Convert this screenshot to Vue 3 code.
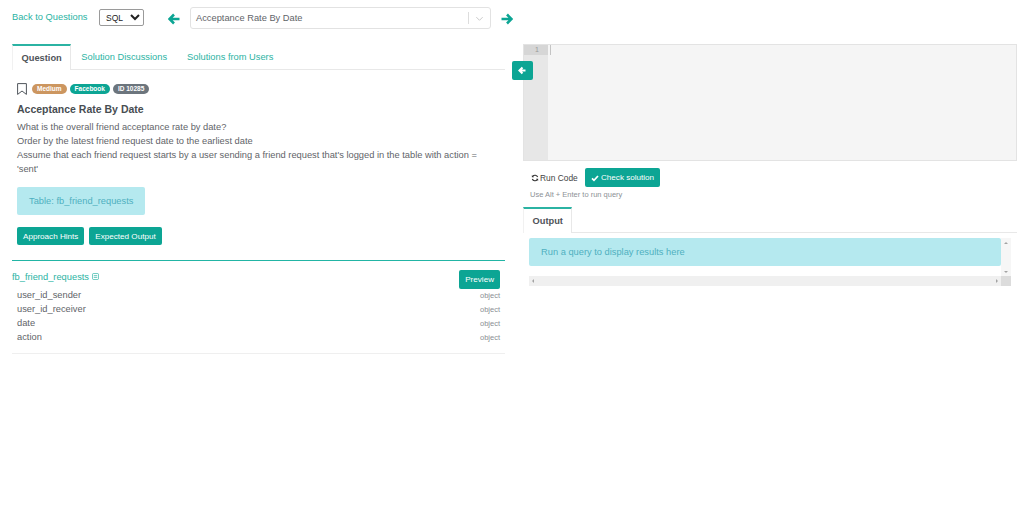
<template>
  <div class="page">
    <header class="topbar">
      <a class="back-link">Back to Questions</a>
      <select class="lang-select">
        <option v-for="lang in languages" :key="lang">{{ lang }}</option>
      </select>
      <svg class="nav-arrow prev" viewBox="0 0 12 12"><path d="M6 1.5 1.5 6 6 10.5M2 6h9.5" /></svg>
      <div class="combo">
        <span class="combo-value">Acceptance Rate By Date</span>
        <span class="combo-sep"></span>
        <svg class="combo-caret" viewBox="0 0 10 10"><path d="M1.5 3.5 5 7l3.5-3.5" /></svg>
      </div>
      <svg class="nav-arrow next" viewBox="0 0 12 12"><path d="M6 1.5 10.5 6 6 10.5M10 6H.5" /></svg>
    </header>

    <main class="columns">
      <section class="left">
        <nav class="tabs">
          <span class="tab active">Question</span>
          <a v-for="tab in tabs" :key="tab" class="tab">{{ tab }}</a>
        </nav>

        <div class="question">
          <div class="badges">
            <svg class="bookmark" viewBox="0 0 10 12"><path d="M.6.6h8.8v10.8L5 8 .6 11.4z" /></svg>
            <span class="badge medium">Medium</span>
            <span class="badge company">Facebook</span>
            <span class="badge qid">ID 10285</span>
          </div>
          <h1>Acceptance Rate By Date</h1>
          <p v-for="line in questionLines" :key="line">{{ line }}</p>
          <div class="alert table-alert">Table: fb_friend_requests</div>
          <div class="hint-buttons">
            <button class="btn">Approach Hints</button>
            <button class="btn">Expected Output</button>
          </div>
        </div>

        <div class="schema">
          <div class="schema-head">
            <span class="schema-name">fb_friend_requests
              <svg class="collapse" viewBox="0 0 8 8"><rect x=".5" y=".5" width="7" height="7" rx="1.5" /><path d="M2 3h4M2 5h4" /></svg>
            </span>
            <button class="btn">Preview</button>
          </div>
          <div v-for="col in schemaCols" :key="col" class="schema-row">
            <span>{{ col }}</span>
            <small>object</small>
          </div>
        </div>
      </section>

      <section class="right">
        <button class="collapse-btn" aria-label="Collapse">
          <svg viewBox="0 0 12 12"><path d="M6 2 2 6l4 4M2.5 6H10" /></svg>
        </button>
        <div class="editor">
          <div class="gutter"><span class="line-no">1</span></div>
          <div class="code"><span class="cursor"></span></div>
        </div>

        <div class="actions">
          <button class="run-btn">
            <svg viewBox="0 0 12 12"><path d="M10 4.5A4.3 4.3 0 0 0 2.6 3.6M2 7.5a4.3 4.3 0 0 0 7.4.9" /><path class="solid" d="M1.3 1.6v3.2h3.2zM10.7 10.4V7.2H7.5z" /></svg>
            Run Code
          </button>
          <button class="btn check-btn">
            <svg viewBox="0 0 12 12"><path d="M1.5 6.5l3 3 6-6.5" /></svg>
            Check solution
          </button>
        </div>
        <div class="run-hint">Use Alt + Enter to run query</div>

        <nav class="tabs output-tabs">
          <span class="tab active">Output</span>
        </nav>

        <div class="output">
          <div class="output-main">
            <div class="alert output-alert">Run a query to display results here</div>
            <div class="scroll-v"><i class="up"></i><i class="down"></i></div>
          </div>
          <div class="scroll-h"><i class="left-tri"></i><i class="right-tri"></i><span class="corner"></span></div>
        </div>
      </section>
    </main>
  </div>
</template>

<script setup>
const languages = ['SQL', 'Python']
const tabs = ['Solution Discussions', 'Solutions from Users']
const questionLines = [
  'What is the overall friend acceptance rate by date?',
  'Order by the latest friend request date to the earliest date',
  "Assume that each friend request starts by a user sending a friend request that's logged in the table with action = 'sent'",
]
const schemaCols = ['user_id_sender', 'user_id_receiver', 'date', 'action']
</script>

<style>
html, body {
  margin: 0;
  background: #fff;
}
</style>

<style scoped>
.page {
  width: 1024px;
  height: 512px;
  overflow: hidden;
  box-sizing: border-box;
  padding: 7px 7px 0 12px;
  font-family: "Liberation Sans", Arial, sans-serif;
  font-size: 9.3px;
  color: #5f6469;
}

.topbar {
  display: flex;
  align-items: center;
  height: 22px;
}
.back-link {
  color: #2bb3a3;
  width: 87px;
  margin-bottom: 2px;
}
.lang-select {
  width: 45px;
  height: 17px;
  padding: 0 0 0 2px;
  font: 8.5px "Liberation Sans", Arial, sans-serif;
  color: #222;
  background: #fff;
  border: 1px solid #9a9a9a;
  border-radius: 2px;
  margin-bottom: 1px;
}
.nav-arrow {
  width: 12px;
  height: 12px;
  fill: none;
  stroke: #0ca594;
  stroke-width: 2.6;
  margin-top: 2px;
}
.nav-arrow.prev {
  margin-left: 24px;
}
.nav-arrow.next {
  margin-left: 10px;
}
.combo {
  display: flex;
  align-items: center;
  width: 301px;
  height: 22px;
  box-sizing: border-box;
  margin-left: 10px;
  padding: 0 6px 0 5px;
  border: 1px solid #e2e2e2;
  border-radius: 3px;
}
.combo-value {
  flex: 1;
  color: #5f6469;
}
.combo-sep {
  width: 1px;
  height: 12px;
  background: #ddd;
  margin-right: 6px;
}
.combo-caret {
  width: 9px;
  height: 9px;
  fill: none;
  stroke: #c4c4c4;
}

.columns {
  display: grid;
  grid-template-columns: 493px 494px;
  column-gap: 18px;
  margin-top: 15px;
}

.tabs {
  display: flex;
  height: 26px;
  border-bottom: 1px solid #e8e8e8;
  box-sizing: border-box;
}
.tab {
  display: flex;
  align-items: center;
  padding: 0 10px;
  color: #2bb3a3;
  height: 25px;
}
.tab.active {
  height: 26px;
  box-sizing: border-box;
  padding: 0 8.5px;
  border-top: 2px solid #2bb3a3;
  border-left: 1px solid #f1f1f1;
  border-right: 1px solid #e8e8e8;
  background: #fff;
  color: #4f5459;
  font-weight: bold;
}

.question {
  padding: 12px 0 0 5px;
}
.badges {
  display: flex;
  align-items: center;
  height: 13px;
}
.bookmark {
  width: 10px;
  height: 12px;
  margin-right: 5px;
  fill: none;
  stroke: #50565c;
  stroke-width: 1;
}
.badge {
  height: 10px;
  line-height: 10px;
  padding: 0 5px;
  margin-right: 3px;
  border-radius: 5px;
  color: #fff;
  font-size: 6.5px;
  font-weight: bold;
}
.badge.medium {
  background: #cc9660;
}
.badge.company {
  background: #0ca594;
}
.badge.qid {
  background: #6c757d;
}
h1 {
  margin: 7px 0 4px;
  font-size: 10.5px;
  line-height: 14px;
  font-weight: bold;
  color: #484d52;
}
p {
  margin: 0;
  width: 480px;
  line-height: 14px;
}
.alert {
  box-sizing: border-box;
  background: #b5e9ef;
  color: #4fb0c0;
  border-radius: 2px;
}
.table-alert {
  width: 128px;
  height: 28px;
  line-height: 28px;
  margin-top: 11px;
  padding-left: 12px;
}
.hint-buttons {
  display: flex;
  gap: 5px;
  margin-top: 12px;
}
.btn {
  display: inline-flex;
  align-items: center;
  height: 18px;
  padding: 0 6px;
  border: none;
  border-radius: 2px;
  background: #0ca594;
  color: #fff;
  font: 8.1px "Liberation Sans", Arial, sans-serif;
}

.schema {
  margin-top: 15px;
  height: 94px;
  box-sizing: border-box;
  border-top: 1.5px solid #22b5a5;
  border-bottom: 1px solid #efefef;
  padding-top: 9px;
}
.schema-head {
  display: flex;
  justify-content: space-between;
  height: 18px;
  padding-right: 5px;
}
.schema-name {
  color: #2bb3a3;
  margin-top: 2px;
}
.collapse {
  width: 7px;
  height: 7px;
  fill: none;
  stroke: #2bb3a3;
  stroke-width: .8;
}
.schema-head .btn {
  height: 19px;
}
.schema-row {
  display: flex;
  justify-content: space-between;
  align-items: center;
  height: 14px;
  padding: 0 5px;
}
.schema-row small {
  font-size: 7.5px;
  color: #8a8f94;
}

.right {
  position: relative;
}
.collapse-btn {
  position: absolute;
  left: -11px;
  top: 17px;
  z-index: 2;
  display: flex;
  align-items: center;
  justify-content: center;
  width: 21px;
  height: 19px;
  padding: 0;
  border: none;
  border-radius: 2px;
  background: #0ca594;
}
.collapse-btn svg {
  width: 9px;
  height: 9px;
  fill: none;
  stroke: #fff;
  stroke-width: 2.8;
}
.editor {
  display: flex;
  height: 117px;
  box-sizing: border-box;
  border: 1px solid #e3e3e3;
  background: #f5f5f5;
}
.gutter {
  width: 24px;
  background: #e7e7e7;
}
.line-no {
  display: block;
  height: 10px;
  line-height: 10px;
  padding-right: 9px;
  text-align: right;
  font-size: 7px;
  background: #d6d6d6;
  color: #999;
}
.code {
  flex: 1;
  padding-left: 2px;
}
.cursor {
  display: block;
  width: 1px;
  height: 10px;
  background: #c4c4c4;
}

.actions {
  display: flex;
  align-items: center;
  margin-top: 7px;
  padding-left: 8px;
}
.run-btn {
  display: flex;
  align-items: center;
  gap: 1px;
  width: 54px;
  padding: 0;
  border: none;
  background: none;
  color: #444;
  font: 8.4px "Liberation Sans", Arial, sans-serif;
}
.run-btn svg {
  width: 8px;
  height: 8px;
  fill: none;
  stroke: #333;
  stroke-width: 1.8;
}
.run-btn .solid {
  fill: #333;
  stroke: none;
}
.check-btn {
  height: 19px;
  padding: 0 6px;
  gap: 2px;
}
.check-btn svg {
  width: 8px;
  height: 8px;
  fill: none;
  stroke: #fff;
  stroke-width: 2.6;
}
.run-hint {
  margin: 3px 0 0 7px;
  font-size: 7.5px;
  line-height: 10px;
  color: #8d9296;
}

.output-tabs {
  margin-top: 7px;
}
.output {
  width: 488px;
  margin: 5px 0 0 6px;
}
.output-main {
  display: flex;
  height: 38px;
}
.output-alert {
  width: 472px;
  height: 28px;
  line-height: 28px;
  padding-left: 12px;
}
.scroll-v {
  position: relative;
  width: 10px;
  background: #f6f6f6;
}
.scroll-h {
  position: relative;
  height: 10px;
  width: 482px;
  background: #f0f0f0;
}
.corner {
  position: absolute;
  right: 0;
  top: 0;
  width: 10px;
  height: 10px;
  background: #dcdcdc;
}
.scroll-v i,
.scroll-h i {
  position: absolute;
  width: 0;
  height: 0;
  border: 2px solid transparent;
}
.up {
  left: 3px;
  top: 2px;
  border-bottom-color: #a3a3a3 !important;
}
.down {
  left: 3px;
  bottom: 1px;
  border-top-color: #a3a3a3 !important;
}
.left-tri {
  left: 1px;
  top: 3px;
  border-right-color: #a3a3a3 !important;
}
.right-tri {
  right: 11px;
  top: 3px;
  border-left-color: #a3a3a3 !important;
}
</style>
